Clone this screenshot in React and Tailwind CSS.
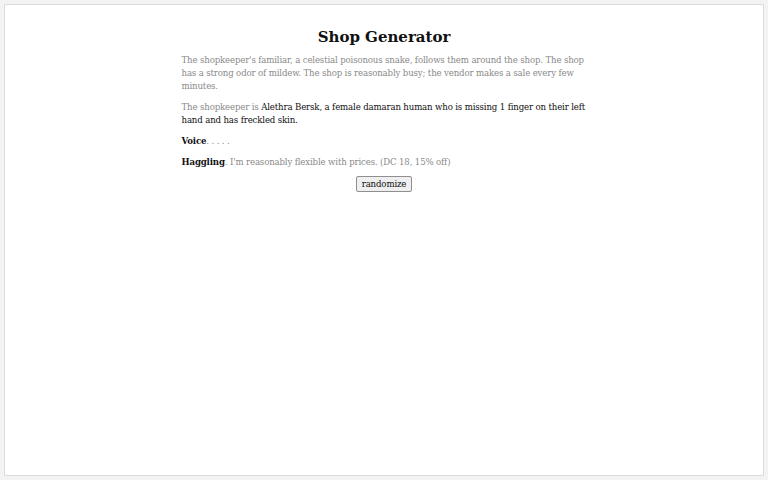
import React from "react";

const serif = { fontFamily: '"DejaVu Serif", "Liberation Serif", serif' };

function ShopInfo() {
  return (
    <div className="w-[405px] mx-auto text-[8.6px] leading-[13px] tracking-[-0.15px] text-[#8a8a8a]">
      <h1 className="text-center text-[15px] leading-[24px] font-bold tracking-normal text-[#111] pt-[20px] pb-[5px]">
        Shop Generator
      </h1>
      <p>
        The shopkeeper's familiar, a celestial poisonous snake, follows them around the shop. The shop
        has a strong odor of mildew. The shop is reasonably busy; the vendor makes a sale every few
        minutes.
      </p>
      <p className="mt-[8px]">
        The shopkeeper is{" "}
        <span className="text-[#111]">
          Alethra Bersk, a female damaran human who is missing 1 finger on their left hand and has
          freckled skin.
        </span>
      </p>
      <p className="mt-[8px]">
        <b className="text-[#111]">Voice</b>. . . . .
      </p>
      <p className="mt-[8px]">
        <b className="text-[#111]">Haggling</b>. I'm reasonably flexible with prices. (DC 18, 15% off)
      </p>
      <div className="flex justify-center mt-[7px]">
        <button className="h-[16px] px-[5px] text-[8.6px] leading-none text-[#111] bg-[#efefef] border border-[#8f8f8f] rounded-[2px]">
          randomize
        </button>
      </div>
    </div>
  );
}

export default function App() {
  return (
    <div className="h-[480px] bg-[#f3f3f3] p-[4px]" style={serif}>
      <div className="h-full bg-white border border-[#dcdcdc]">
        <ShopInfo />
      </div>
    </div>
  );
}
